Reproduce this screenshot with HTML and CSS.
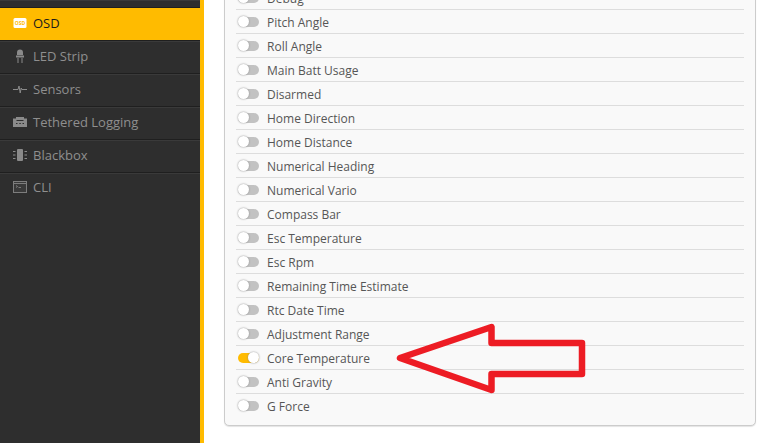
FILE: index.html
```html
<!DOCTYPE html>
<html lang="en">
<head>
<meta charset="utf-8">
<title>OSD</title>
<link rel="stylesheet" href="styles.css">
</head>
<body>
<div class="app">
  <nav class="sidebar">
    <a class="nav-item nav-top"></a>
    <a class="nav-item active">
      <svg class="ico" viewBox="0 0 14 12"><rect x="0.5" y="1" width="13" height="10" rx="1.5" fill="#fff"/><text x="7" y="8" text-anchor="middle" class="osd-t">OSD</text></svg>
      <span>OSD</span>
    </a>
    <a class="nav-item">
      <svg class="ico" viewBox="0 0 14 14"><path d="M4 6V3.500a3 3 0 0 1 6 0V6zM3 6.500h8v2H3z" fill="#8a8a8a"/><path d="M5 9v5M9 9v5" stroke="#8a8a8a" stroke-width="1" fill="none"/></svg>
      <span>LED Strip</span>
    </a>
    <a class="nav-item">
      <svg class="ico" viewBox="0 0 14 14"><path d="M0 7.500h5l1-3.500 1.200 7 1-5 .6 1.500H14" stroke="#8a8a8a" stroke-width="1" fill="none"/></svg>
      <span>Sensors</span>
    </a>
    <a class="nav-item">
      <svg class="ico" viewBox="0 0 14 12"><path d="M0 2.500h3V1h8v1.500h3V11H0z" fill="#8a8a8a"/><path d="M3.500 4.500h7M3 7.500h1.500M6.300 7.500h1.500M9.500 7.500H11" stroke="#2e2e2e" stroke-width="1.200"/></svg>
      <span>Tethered Logging</span>
    </a>
    <a class="nav-item">
      <svg class="ico" viewBox="0 0 14 14"><rect x="4" y="1" width="6" height="12" rx="1" fill="#8a8a8a"/><path d="M0 3.500h2.500M0 7h2.500M0 10.500h2.500M11.500 3.500H14M11.500 7H14M11.500 10.500H14" stroke="#8a8a8a" stroke-width="1.100"/></svg>
      <span>Blackbox</span>
    </a>
    <a class="nav-item">
      <svg class="ico" viewBox="0 0 14 12"><rect x="0.500" y="0.500" width="13" height="11" fill="#3a3a3a" stroke="#7d7d7d"/><path d="M0.500 2.500h13" stroke="#7d7d7d"/><path d="M3 4.500l1.500 1L3 6.500M5.500 6.500H8" stroke="#8a8a8a" stroke-width="0.800" fill="none"/></svg>
      <span>CLI</span>
    </a>
  </nav>
  <main class="content">
    <section class="panel">
      <div class="row"><span class="toggle"></span><span>Debug</span></div>
      <div class="row"><span class="toggle"></span><span>Pitch Angle</span></div>
      <div class="row"><span class="toggle"></span><span>Roll Angle</span></div>
      <div class="row"><span class="toggle"></span><span>Main Batt Usage</span></div>
      <div class="row"><span class="toggle"></span><span>Disarmed</span></div>
      <div class="row"><span class="toggle"></span><span>Home Direction</span></div>
      <div class="row"><span class="toggle"></span><span>Home Distance</span></div>
      <div class="row"><span class="toggle"></span><span>Numerical Heading</span></div>
      <div class="row"><span class="toggle"></span><span>Numerical Vario</span></div>
      <div class="row"><span class="toggle"></span><span>Compass Bar</span></div>
      <div class="row"><span class="toggle"></span><span>Esc Temperature</span></div>
      <div class="row"><span class="toggle"></span><span>Esc Rpm</span></div>
      <div class="row"><span class="toggle"></span><span>Remaining Time Estimate</span></div>
      <div class="row"><span class="toggle"></span><span>Rtc Date Time</span></div>
      <div class="row"><span class="toggle"></span><span>Adjustment Range</span></div>
      <div class="row"><span class="toggle on"></span><span>Core Temperature</span></div>
      <div class="row"><span class="toggle"></span><span>Anti Gravity</span></div>
      <div class="row"><span class="toggle"></span><span>G Force</span></div>
    </section>
  </main>
  <svg class="arrow" viewBox="0 0 767 443"><path d="M400 358L491.500 327V343H582V374H491.500V390Z" fill="none" stroke="#ed1c24" stroke-width="6.500" stroke-linejoin="round"/></svg>
</div>
</body>
</html>
```
FILE: styles.css
```css
* { box-sizing: border-box; }
html, body { margin: 0; height: 100%; overflow: hidden; background: #fff; }
body { font-family: "Open Sans", sans-serif; }
.app { display: flex; height: 443px; position: relative; overflow: hidden; }
.sidebar {
  width: 204px;
  flex: none;
  background: #2e2e2e;
  border-right: 4px solid #ffbb00;
  display: flex;
  flex-direction: column;
}
.nav-item {
  display: flex;
  align-items: center;
  gap: 6px;
  height: 33px;
  flex: none;
  padding: 0 0 2px 13px;
  font-size: 13px;
  color: #8f8f8f;
  border-bottom: 1px solid #1f1f1f;
  box-shadow: inset 0 1px 0 #3a3a3a;
}
.nav-top { height: 8px; padding: 0; }
.active { background: #ffbb00; color: #1c1c1c; box-shadow: none; }
.nav-item:last-child { border-bottom: 0; padding-bottom: 5px; }
.ico { width: 14px; height: 14px; flex: none; }
.osd-t { font-family: "Open Sans", sans-serif; font-size: 5px; font-weight: 700; fill: #ffbb00; }
.content { flex: 1; padding: 0 11px 0 20px; min-width: 0; }
.panel {
  margin-top: -15px;
  padding: 0 11px;
  background: #f9f9f9;
  border: 1px solid #ccc;
  border-radius: 5px;
  box-shadow: 0 1px 1px #e4e4e4;
}
.row {
  display: flex;
  align-items: center;
  gap: 8px;
  height: 24px;
  padding-top: 1px;
  font-size: 12px;
  color: #565656;
  border-bottom: 1px solid #ddd;
}
.row:last-child { height: 31px; padding: 0 0 7px; border-bottom: 0; }
.toggle {
  position: relative;
  width: 21px;
  height: 10px;
  margin-left: 2px;
  border-radius: 5px;
  background: #c2c2c2;
  flex: none;
}
.toggle::after {
  content: "";
  position: absolute;
  left: 0;
  top: -1px;
  width: 11px;
  height: 11px;
  border-radius: 50%;
  background: #fff;
  box-shadow: 0 0 2px #888;
}
.toggle.on { background: #ffbb00; }
.toggle.on::after { left: 10px; }
.arrow { position: absolute; left: 0; top: 0; width: 767px; height: 443px; pointer-events: none; }
```
